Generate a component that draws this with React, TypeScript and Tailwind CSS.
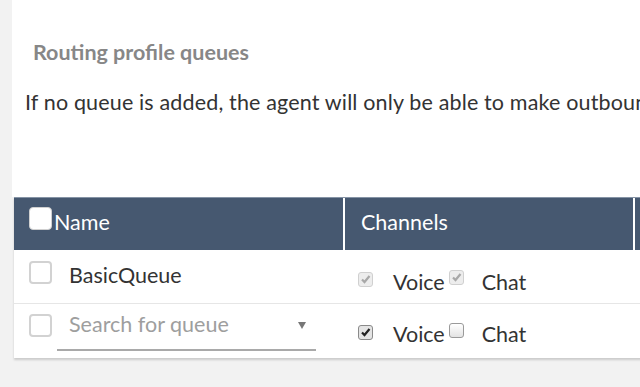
import React from 'react';

function BigBox({ white = false }: { white?: boolean }) {
  return (
    <span
      className={`block w-[23px] h-[23px] rounded-[4px] shrink-0 ${
        white ? 'bg-white border border-[#d0d0d0]' : 'bg-white border-2 border-[#d2d2d2]'
      }`}
    />
  );
}

function SmallBox({ state }: { state: 'disabled' | 'checked' | 'empty' }) {
  const box =
    state === 'disabled'
      ? 'bg-[#ededed] border-[#d0d0d0]'
      : state === 'checked'
      ? 'bg-[#e4e4e4] border-[#8a8a8a]'
      : 'bg-gradient-to-b from-[#ffffff] to-[#e3e3e3] border-[#9a9a9a]';
  return (
    <span className={`relative block w-[15px] h-[15px] rounded-[3px] border shrink-0 ${box}`}>
      {state !== 'empty' && (
        <svg viewBox="0 0 13 13" className="absolute inset-0 w-[13px] h-[13px]">
          <path
            d="M3 6.5 L5.5 9 L10.5 3"
            fill="none"
            stroke={state === 'disabled' ? '#a8a8a8' : '#222'}
            strokeWidth="2.2"
          />
        </svg>
      )}
    </span>
  );
}

export default function App() {
  return (
    <div className="w-[640px] h-[387px] overflow-hidden bg-[#f2f2f2] font-['Lato',sans-serif] text-[21.5px] leading-[26px]">
      <div className="ml-[12px] w-[700px] h-[197px] bg-white">
        <div className="pt-[39px] pl-[21px] font-bold text-[#878787]">Routing profile queues</div>
        <div className="mt-[24px] pl-[13px] text-[#333] whitespace-nowrap tracking-[0.15px]">
          If no queue is added, the agent will only be able to make outbound calls.
        </div>
      </div>
      <div className="ml-[14px] w-[700px] bg-white shadow-[0_2px_2px_rgba(0,0,0,0.16)]">
        <div className="flex h-[53px] bg-[#465870] border-t border-[#8593a5] text-white">
          <div className="w-[331px] border-r-2 border-white flex items-start pl-[15px] pt-[9px]">
            <BigBox white />
            <span className="ml-[2px] mt-[2px]">Name</span>
          </div>
          <div className="w-[290px] border-r-2 border-white pl-[16px] pt-[11px]">Channels</div>
          <div className="flex-1" />
        </div>
        <div className="flex h-[54px] border-b border-[#e6e6e6] text-[#333]">
          <div className="w-[331px] flex items-start pl-[15px] pt-[11px]">
            <BigBox />
            <span className="ml-[17px] mt-[1px]">BasicQueue</span>
          </div>
          <div className="flex items-start pl-[13px]">
            <span className="mt-[22px]">
              <SmallBox state="disabled" />
            </span>
            <span className="ml-[20px] mt-[19px]">Voice</span>
            <span className="ml-[4px] mt-[20px]">
              <SmallBox state="disabled" />
            </span>
            <span className="ml-[18px] mt-[19px]">Chat</span>
          </div>
        </div>
        <div className="flex h-[54px] text-[#333]">
          <div className="w-[331px] flex items-start pl-[15px]">
            <span className="mt-[10px]">
              <BigBox />
            </span>
            <div className="ml-[5px] w-[259px] h-[47px] border-b-2 border-[#a9a9a9] flex items-start justify-between pl-[12px] pr-[10px] pt-[7px]">
              <span className="text-[#9e9e9e]">Search for queue</span>
              <svg viewBox="0 0 8 7" className="w-[8px] h-[7px] mt-[11px]">
                <path d="M0 0 L8 0 L4 7 Z" fill="#777" />
              </svg>
            </div>
          </div>
          <div className="flex items-start pl-[13px]">
            <span className="mt-[21px]">
              <SmallBox state="checked" />
            </span>
            <span className="ml-[20px] mt-[17px]">Voice</span>
            <span className="ml-[4px] mt-[19px]">
              <SmallBox state="empty" />
            </span>
            <span className="ml-[18px] mt-[17px]">Chat</span>
          </div>
        </div>
      </div>
    </div>
  );
}
